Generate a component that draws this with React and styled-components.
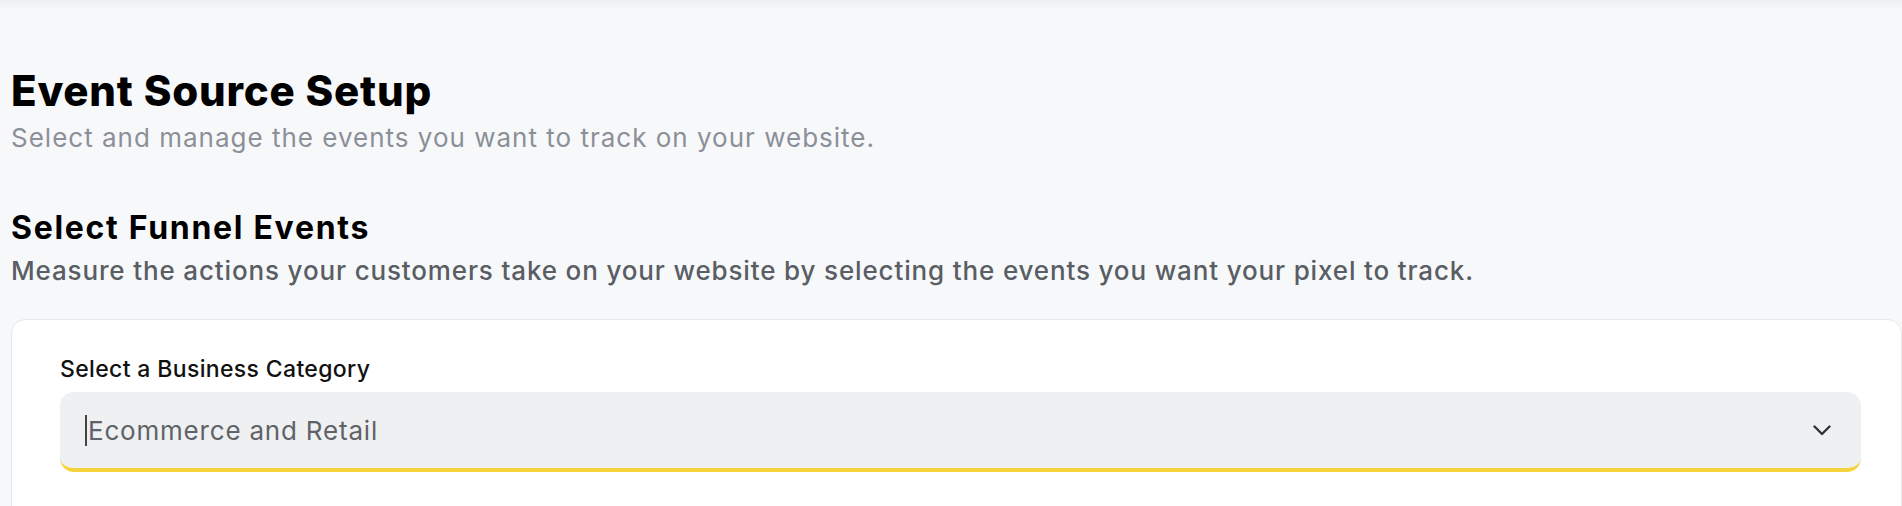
import styled, { createGlobalStyle } from "styled-components";

const GlobalStyle = createGlobalStyle`
  html, body {
    margin: 0;
    padding: 0;
  }
  body {
    background: linear-gradient(#eceef1 0px, #f7f8fa 10px) #f7f8fa;
    font-family: Inter, "Noto Sans", "Liberation Sans", sans-serif;
    overflow: hidden;
  }
`;

const Page = styled.main`
  padding: 67px 0 0 11px;
  min-height: 506px;
  box-sizing: border-box;
`;

const Title = styled.h1`
  margin: 0;
  font-size: 42px;
  line-height: 48px;
  font-weight: 800;
  letter-spacing: 0.8px;
  color: #000;
`;

const Subtitle = styled.p`
  margin: 7px 0 0;
  font-size: 26px;
  line-height: 31px;
  font-weight: 400;
  letter-spacing: 1px;
  color: #8b9098;
`;

const SectionTitle = styled.h2`
  margin: 57px 0 0;
  font-size: 32px;
  line-height: 36px;
  font-weight: 700;
  letter-spacing: 1.7px;
  color: #000;
`;

const Description = styled.p`
  margin: 9px 0 0;
  font-size: 26px;
  line-height: 31px;
  font-weight: 500;
  letter-spacing: 0.85px;
  color: #595d64;
`;

const Card = styled.section`
  margin-top: 33px;
  background: #fff;
  border: 1px solid #e5e7ea;
  border-radius: 14px;
  padding: 35px 40px 60px 48px;
  min-height: 200px;
`;

const Label = styled.label`
  display: block;
  font-size: 23px;
  line-height: 29px;
  font-weight: 500;
  letter-spacing: 0.35px;
  color: #111;
`;

const SelectBox = styled.div`
  margin-top: 8px;
  height: 76px;
  box-sizing: content-box;
  display: flex;
  align-items: center;
  justify-content: space-between;
  padding: 0 30px 0 25px;
  background: #eff0f2;
  border-radius: 14px;
  border-bottom: 4px solid #f6d33d;
`;

const Value = styled.span`
  display: flex;
  align-items: center;
  font-size: 26px;
  letter-spacing: 0.8px;
  color: #5f6368;
`;

const Caret = styled.span`
  display: inline-block;
  width: 2px;
  height: 31px;
  background: #444;
  margin-right: 1px;
`;

const Chevron = () => (
  <svg width="18" height="11" viewBox="0 0 18 11" fill="none">
    <path
      d="M1.5 1.5 L9 9 L16.5 1.5"
      stroke="#333"
      strokeWidth="2.4"
      strokeLinecap="round"
      strokeLinejoin="round"
    />
  </svg>
);

export default function App() {
  return (
    <>
      <GlobalStyle />
      <Page>
        <Title>Event Source Setup</Title>
        <Subtitle>
          Select and manage the events you want to track on your website.
        </Subtitle>
        <SectionTitle>Select Funnel Events</SectionTitle>
        <Description>
          Measure the actions your customers take on your website by selecting
          the events you want your pixel to track.
        </Description>
        <Card>
          <Label>Select a Business Category</Label>
          <SelectBox>
            <Value>
              <Caret />
              Ecommerce and Retail
            </Value>
            <Chevron />
          </SelectBox>
        </Card>
      </Page>
    </>
  );
}
